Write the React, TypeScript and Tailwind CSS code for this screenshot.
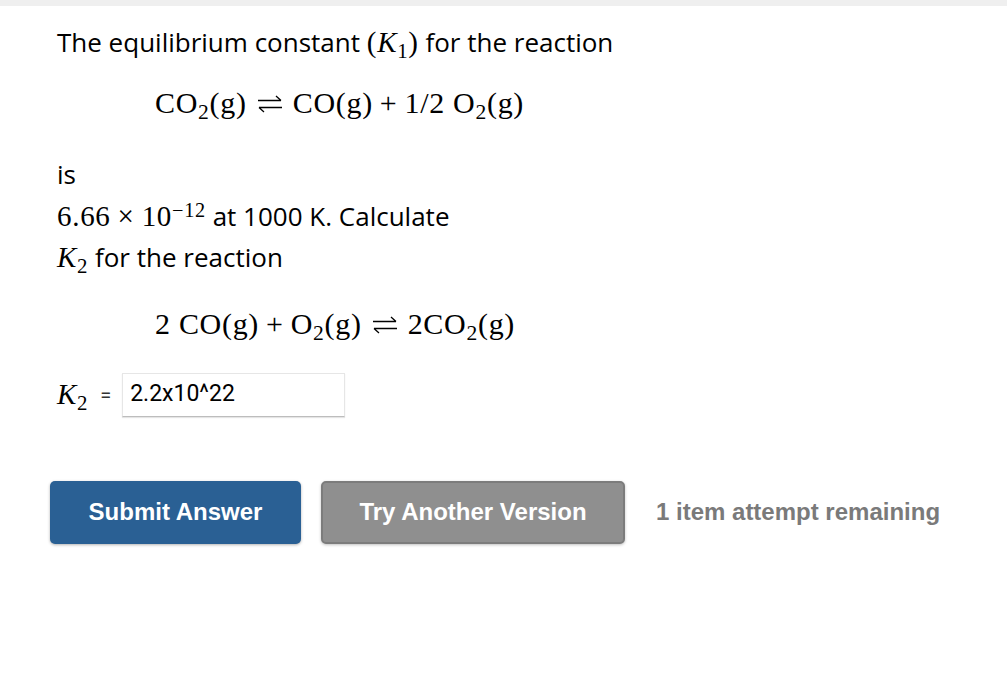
import React from 'react';

const mathFont = { fontFamily: '"Liberation Serif", "DejaVu Serif", serif', letterSpacing: '0.7px' };

function M({ children, className = '' }: { children: React.ReactNode; className?: string }) {
  return (
    <span className={className} style={mathFont}>
      {children}
    </span>
  );
}

function Sub({ children }: { children: React.ReactNode }) {
  return <span className="relative top-[6px] text-[0.72em] leading-none">{children}</span>;
}

function Op({ children }: { children: React.ReactNode }) {
  return <span className="mx-[7px]">{children}</span>;
}

function Arrow() {
  return (
    <svg width="28" height="20" viewBox="0 0 28 20" className="inline-block mx-[9px] -mt-1 align-middle">
      <path d="M2 6.5 H25 M20 2 L25 6.5" stroke="#000" strokeWidth="1.3" fill="none" />
      <path d="M26 13.5 H3 M8 18 L3 13.5" stroke="#000" strokeWidth="1.3" fill="none" />
    </svg>
  );
}

export default function App() {
  return (
    <div className="w-[1007px] h-[698px] bg-white overflow-hidden font-['Open_Sans',sans-serif] text-black">
      <div className="h-[6px] bg-[#efefef]" />
      <div className="pl-[57px] pt-[18px]">
        <p className="text-[26px] leading-[36px]">
          The equilibrium constant{' '}
          <M className="text-[29px]">
            (<i>K</i>
            <Sub>1</Sub>)
          </M>{' '}
          for the reaction
        </p>

        <div className="pl-[98px] mt-[24px] text-[30px] leading-[36px]">
          <M>
            CO<Sub>2</Sub>(g)
            <Arrow />
            CO(g)<Op>+</Op>1/2 O<Sub>2</Sub>(g)
          </M>
        </div>

        <div className="mt-[33px] text-[26px] leading-[41.5px]">
          <p>is</p>
          <p>
            <M className="text-[29px]">
              6.66<Op>×</Op>10<sup className="text-[0.7em] relative -top-[9px]">−12</sup>
            </M>{' '}
            at 1000 K. Calculate
          </p>
          <p>
            <M className="text-[29px]">
              <i>K</i>
              <Sub>2</Sub>
            </M>{' '}
            for the reaction
          </p>
        </div>

        <div className="pl-[98px] mt-[26px] text-[30px] leading-[36px]">
          <M>
            2 CO(g)<Op>+</Op>O<Sub>2</Sub>(g)
            <Arrow />
            2CO<Sub>2</Sub>(g)
          </M>
        </div>

        <div className="mt-[31px] flex items-center">
          <M className="text-[29px]">
            <i>K</i>
            <Sub>2</Sub>
          </M>
          <span className="ml-[12px] text-[20px] font-['Roboto',sans-serif] text-[#333]">=</span>
          <div className="ml-[11px] w-[223px] h-[44px] border border-[#e6e6e6] border-b-[#bdbdbd] shadow-[0_1px_1px_rgba(0,0,0,0.1)] flex items-center pl-[7px] font-['Roboto',sans-serif] text-[23px]">
            2.2x10^22
          </div>
        </div>
      </div>

      <div className="flex items-center pl-[50px] mt-[64px] font-['Liberation_Sans',sans-serif] font-bold text-[24px]">
        <button className="w-[251px] h-[63px] rounded-[5px] bg-[#2a6094] text-white shadow-[0_1px_3px_rgba(0,0,0,0.3)]">
          Submit Answer
        </button>
        <button className="ml-[20px] w-[304px] h-[63px] rounded-[5px] bg-[#8f8f8f] border-2 border-[#7c7c7c] text-white shadow-[0_1px_3px_rgba(0,0,0,0.25)]">
          Try Another Version
        </button>
        <span className="ml-[31px] text-[#7a7a7a]">1 item attempt remaining</span>
      </div>
    </div>
  );
}
